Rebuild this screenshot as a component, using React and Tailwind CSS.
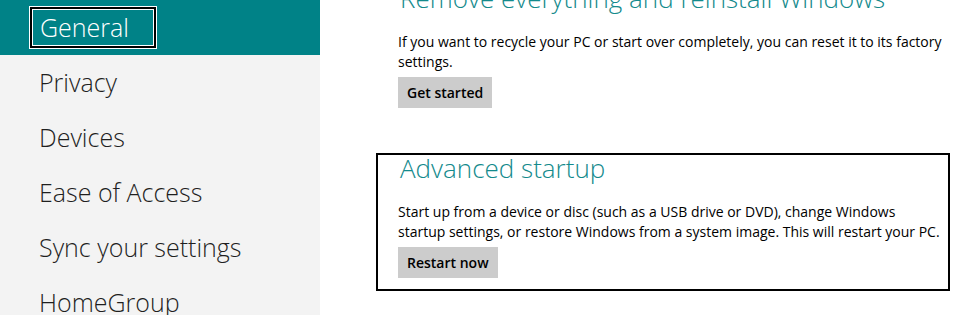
const items = [
  "General",
  "Privacy",
  "Devices",
  "Ease of Access",
  "Sync your settings",
  "HomeGroup",
];

export default function App() {
  return (
    <div className="flex h-[315px] w-[971px] overflow-hidden bg-white font-['Open_Sans','Liberation_Sans',sans-serif]">
      {/* left nav */}
      <nav className="w-[320px] shrink-0 bg-[#f3f3f3]">
        {items.map((label, i) =>
          i === 0 ? (
            <div key={label} className="flex h-[55px] items-center bg-[#008287] pl-[30px]">
              <span className="flex h-[41px] w-[126px] items-center border-2 border-black pl-[8px] text-[25px] font-light text-white shadow-[0_0_0_1px_#fff,inset_0_0_0_1px_#fff]">
                {label}
              </span>
            </div>
          ) : (
            <div key={label} className="flex h-[55px] items-center pl-[39px] text-[25px] font-light text-[#1f1f1f]">
              {label}
            </div>
          )
        )}
      </nav>

      {/* right content, scrolled a bit */}
      <main className="mt-[-17px] flex flex-col gap-[32px] pl-[56px]">
        <Section
          title="Remove everything and reinstall Windows"
          text="If you want to recycle your PC or start over completely, you can reset it to its factory settings."
          button="Get started"
        />
        <Section
          focused
          title="Advanced startup"
          text="Start up from a device or disc (such as a USB drive or DVD), change Windows startup settings, or restore Windows from a system image. This will restart your PC."
          button="Restart now"
        />
      </main>
    </div>
  );
}

function Section({ title, text, button, focused }) {
  return (
    <section
      className={
        "w-[574px] border-2 pb-[11px] pl-[20px] pr-[5px] " +
        (focused ? "border-black" : "border-transparent")
      }
    >
      <h2 className="h-[47px] pl-[2px] text-[26px] font-light leading-[26px] text-[#138a8c] whitespace-nowrap">
        {title}
      </h2>
      <p className="text-[14px] leading-[20px] text-black">{text}</p>
      <button className="mt-[5px] h-[31px] bg-[#cccccc] px-[9px] text-[14px] font-semibold text-black">
        {button}
      </button>
    </section>
  );
}
